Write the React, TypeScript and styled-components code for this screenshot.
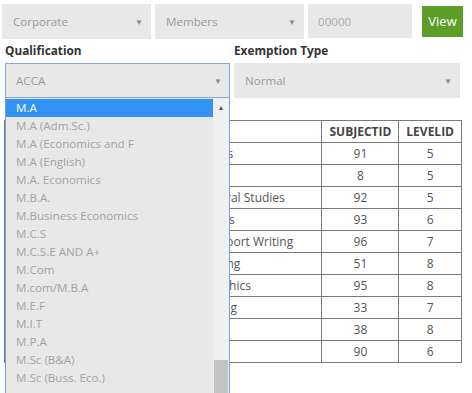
import styled, { createGlobalStyle } from 'styled-components'

const GlobalStyle = createGlobalStyle`
  html {
    overflow: hidden;
  }
  body {
    margin: 0;
    background: #fff;
    font-family: "Open Sans", "Noto Sans", sans-serif;
    font-size: 12px;
    color: #555;
  }
`

const Page = styled.div`
  box-sizing: border-box;
  min-height: 100vh;
  padding: 4px 9px 0 2px;
  display: flex;
  flex-direction: column;
`

const FilterRow = styled.div`
  display: flex;
  align-items: center;
  gap: 4px;
  height: 34px;
`

const SelectBox = styled.div<{ $w?: number; $focus?: boolean }>`
  position: relative;
  box-sizing: border-box;
  width: ${({ $w }) => ($w ? `${$w}px` : '100%')};
  height: 35px;
  padding: 0 7px 0 10px;
  display: flex;
  align-items: center;
  justify-content: space-between;
  background: #e8e8e8;
  color: #9a9a9a;
  font-size: 11.6px;
  border: 1px solid ${({ $focus }) => ($focus ? '#86a8d8' : '#e8e8e8')};
`

const Caret = styled.span`
  font-size: 8px;
  color: #8a8a8a;
`

const TextInput = styled.div`
  box-sizing: border-box;
  width: 104px;
  height: 34px;
  padding: 0 10px;
  display: flex;
  align-items: center;
  background: #e8e8e8;
  color: #a8a8a8;
  font-size: 11.6px;
`

const ViewButton = styled.button`
  margin-left: 6px;
  width: 41px;
  height: 31px;
  border: 0;
  padding: 0;
  background: #5b9f28;
  color: #fff;
  font-family: inherit;
  font-size: 13px;
`

const FieldGrid = styled.div`
  display: grid;
  grid-template-columns: 225px 226px;
  column-gap: 4px;
  padding-left: 3px;
`

const Field = styled.div`
  position: relative;
  display: flex;
  flex-direction: column;
`

const Label = styled.label`
  font-weight: 700;
  font-size: 11.8px;
  color: #333;
  height: 18px;
  line-height: 18px;
  margin: 3px 0 4px;
`

const DropList = styled.div`
  position: absolute;
  z-index: 5;
  top: 100%;
  left: 0;
  width: 225px;
  height: 296px;
  box-sizing: border-box;
  border-left: 1px solid #7f9fd0;
  border-right: 1px solid #7f9fd0;
  background: #e8e8e8;
  display: flex;
`

const Options = styled.ul`
  list-style: none;
  margin: 0;
  padding: 1px 0 0;
  flex: 1;
  overflow: hidden;
`

const Option = styled.li<{ $active?: boolean }>`
  height: 18px;
  line-height: 18px;
  padding-left: 10px;
  font-size: 11.6px;
  white-space: nowrap;
  background: ${({ $active }) => ($active ? '#3393f5' : 'transparent')};
  color: ${({ $active }) => ($active ? '#fff' : '#a3a3a3')};
`

const ScrollTrack = styled.div`
  width: 16px;
  background: #f0f0f0;
  display: flex;
  flex-direction: column;
  align-items: center;
`

const ScrollArrow = styled.span`
  height: 18px;
  line-height: 20px;
  font-size: 7px;
  color: #555;
`

const ScrollThumb = styled.div`
  margin-top: 244px;
  width: 14px;
  flex: 1;
  background: #c2c2c2;
`

const Table = styled.table`
  margin: 22px 0 0 2px;
  width: 458px;
  border-collapse: collapse;
  font-size: 12px;
  color: #555;

  th, td {
    border: 1px solid #7a7a7a;
    height: 21px;
    padding: 0 7px;
    white-space: nowrap;
  }
  th {
    font-weight: 700;
    color: #444;
    text-align: center;
  }
`

const NameCell = styled.td`
  text-align: left;
`

const NumCell = styled.td`
  text-align: center;
`

const options = [
  'M.A',
  'M.A (Adm.Sc.)',
  'M.A (Economics and F',
  'M.A (English)',
  'M.A. Economics',
  'M.B.A.',
  'M.Business Economics',
  'M.C.S',
  'M.C.S.E AND A+',
  'M.Com',
  'M.com/M.B.A',
  'M.E.F',
  'M.I.T',
  'M.P.A',
  'M.Sc (B&A)',
  'M.Sc (Buss. Eco.)',
]

const rows: [string, number, number][] = [
  ['Quantitative Methods and Tax Statistics', 91, 5],
  ['Principles of Economics', 8, 5],
  ['Pakistan Affairs, Islamic, and Behavioural Studies', 92, 5],
  ['Management and Cost Accounting Skills', 93, 6],
  ['Business Communication Skills and Report Writing', 96, 7],
  ['Financial Accountancy and Tax Reporting', 51, 8],
  ['Corporate Governance, Tax Law and Ethics', 95, 8],
  ['Strategic Management and Tax Planning', 33, 7],
  ['Taxation', 38, 8],
  ['Auditing', 90, 6],
]

export default function App() {
  return (
    <>
      <GlobalStyle />
      <Page>
        <FilterRow>
          <SelectBox $w={149}>
            Corporate <Caret>▼</Caret>
          </SelectBox>
          <SelectBox $w={149}>
            Members <Caret>▼</Caret>
          </SelectBox>
          <TextInput>00000</TextInput>
          <ViewButton>View</ViewButton>
        </FilterRow>

        <FieldGrid>
          <Field>
            <Label>Qualification</Label>
            <SelectBox $focus>
              ACCA <Caret>▼</Caret>
            </SelectBox>
            <DropList>
              <Options>
                {options.map((o, i) => (
                  <Option key={o} $active={i === 0}>{o}</Option>
                ))}
              </Options>
              <ScrollTrack>
                <ScrollArrow>▲</ScrollArrow>
                <ScrollThumb />
              </ScrollTrack>
            </DropList>
          </Field>
          <Field>
            <Label>Exemption Type</Label>
            <SelectBox>
              Normal <Caret>▼</Caret>
            </SelectBox>
          </Field>
        </FieldGrid>

        <Table>
          <thead>
            <tr>
              <th style={{ width: 303 }}>SUBJECTNAME</th>
              <th>SUBJECTID</th>
              <th>LEVELID</th>
            </tr>
          </thead>
          <tbody>
            {rows.map(([name, id, level]) => (
              <tr key={id}>
                <NameCell>{name}</NameCell>
                <NumCell>{id}</NumCell>
                <NumCell>{level}</NumCell>
              </tr>
            ))}
          </tbody>
        </Table>
      </Page>
    </>
  )
}
